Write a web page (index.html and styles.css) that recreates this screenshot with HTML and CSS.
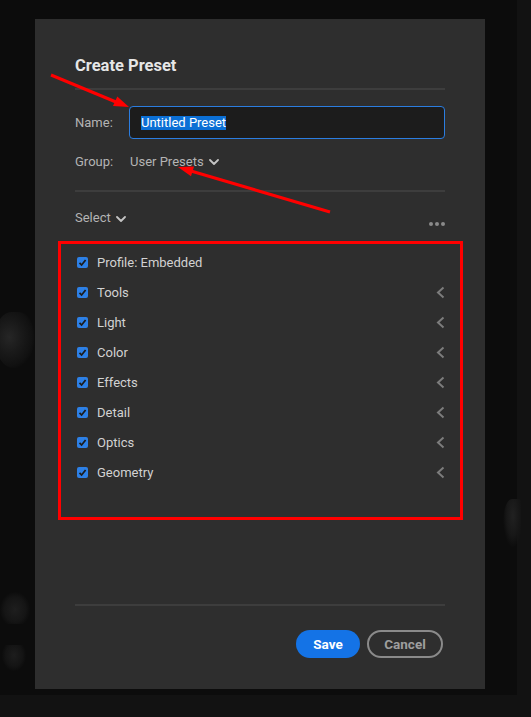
FILE: index.html
```html
<!DOCTYPE html>
<html>
<head>
<meta charset="utf-8">
<link rel="stylesheet" href="styles.css">
</head>
<body>
<div class="scene">
  <div class="photo">
    <div class="blob bottle"></div>
    <div class="blob shard"></div>
    <div class="blob tri1"></div>
    <div class="blob tri2"></div>
  </div>
  <div class="dialog">
    <h1 class="title">Create Preset</h1>
    <div class="rule"></div>
    <div class="field">
      <span class="label">Name:</span>
      <div class="input"><span class="sel">Untitled Preset</span></div>
    </div>
    <div class="field group">
      <span class="label">Group:</span>
      <span class="dropdown">User Presets
        <svg class="chev-down" width="10" height="6" viewBox="0 0 10 6"><polyline points="1,1 5,5 9,1" fill="none" stroke="#c4c4c4" stroke-width="1.8" stroke-linecap="round" stroke-linejoin="round"/></svg>
      </span>
    </div>
    <div class="rule rule2"></div>
    <div class="selectrow">
      <span class="dropdown select">Select
        <svg class="chev-down" width="10" height="6" viewBox="0 0 10 6"><polyline points="1,1 5,5 9,1" fill="none" stroke="#c4c4c4" stroke-width="1.8" stroke-linecap="round" stroke-linejoin="round"/></svg>
      </span>
      <span class="dots"><i></i><i></i><i></i></span>
    </div>
    <div class="list">
      <div class="row"><span class="cb"><svg width="11" height="11" viewBox="0 0 11 11"><polyline points="2.5,5.8 4.6,8 8.6,3" fill="none" stroke="#1c1c1c" stroke-width="1.8"/></svg></span><span class="name">Profile: Embedded</span></div>
      <div class="row"><span class="cb"><svg width="11" height="11" viewBox="0 0 11 11"><polyline points="2.5,5.8 4.6,8 8.6,3" fill="none" stroke="#1c1c1c" stroke-width="1.8"/></svg></span><span class="name">Tools</span><svg class="chev" width="9" height="13" viewBox="0 0 9 13"><polyline points="7.5,1.5 2,6.5 7.5,11.5" fill="none" stroke="#7c7c7c" stroke-width="2"/></svg></div>
      <div class="row"><span class="cb"><svg width="11" height="11" viewBox="0 0 11 11"><polyline points="2.5,5.8 4.6,8 8.6,3" fill="none" stroke="#1c1c1c" stroke-width="1.8"/></svg></span><span class="name">Light</span><svg class="chev" width="9" height="13" viewBox="0 0 9 13"><polyline points="7.5,1.5 2,6.5 7.5,11.5" fill="none" stroke="#7c7c7c" stroke-width="2"/></svg></div>
      <div class="row"><span class="cb"><svg width="11" height="11" viewBox="0 0 11 11"><polyline points="2.5,5.8 4.6,8 8.6,3" fill="none" stroke="#1c1c1c" stroke-width="1.8"/></svg></span><span class="name">Color</span><svg class="chev" width="9" height="13" viewBox="0 0 9 13"><polyline points="7.5,1.5 2,6.5 7.5,11.5" fill="none" stroke="#7c7c7c" stroke-width="2"/></svg></div>
      <div class="row"><span class="cb"><svg width="11" height="11" viewBox="0 0 11 11"><polyline points="2.5,5.8 4.6,8 8.6,3" fill="none" stroke="#1c1c1c" stroke-width="1.8"/></svg></span><span class="name">Effects</span><svg class="chev" width="9" height="13" viewBox="0 0 9 13"><polyline points="7.5,1.5 2,6.5 7.5,11.5" fill="none" stroke="#7c7c7c" stroke-width="2"/></svg></div>
      <div class="row"><span class="cb"><svg width="11" height="11" viewBox="0 0 11 11"><polyline points="2.5,5.8 4.6,8 8.6,3" fill="none" stroke="#1c1c1c" stroke-width="1.8"/></svg></span><span class="name">Detail</span><svg class="chev" width="9" height="13" viewBox="0 0 9 13"><polyline points="7.5,1.5 2,6.5 7.5,11.5" fill="none" stroke="#7c7c7c" stroke-width="2"/></svg></div>
      <div class="row"><span class="cb"><svg width="11" height="11" viewBox="0 0 11 11"><polyline points="2.5,5.8 4.6,8 8.6,3" fill="none" stroke="#1c1c1c" stroke-width="1.8"/></svg></span><span class="name">Optics</span><svg class="chev" width="9" height="13" viewBox="0 0 9 13"><polyline points="7.5,1.5 2,6.5 7.5,11.5" fill="none" stroke="#7c7c7c" stroke-width="2"/></svg></div>
      <div class="row"><span class="cb"><svg width="11" height="11" viewBox="0 0 11 11"><polyline points="2.5,5.8 4.6,8 8.6,3" fill="none" stroke="#1c1c1c" stroke-width="1.8"/></svg></span><span class="name">Geometry</span><svg class="chev" width="9" height="13" viewBox="0 0 9 13"><polyline points="7.5,1.5 2,6.5 7.5,11.5" fill="none" stroke="#7c7c7c" stroke-width="2"/></svg></div>
    </div>
    <div class="rule rule3"></div>
    <div class="buttons">
      <button class="btn save">Save</button>
      <button class="btn cancel">Cancel</button>
    </div>
  </div>
  <svg class="arrows" width="531" height="717" viewBox="0 0 531 717">
    <line x1="51" y1="75" x2="116" y2="102" stroke="#f00" stroke-width="3"/>
    <polygon points="129,107 117.3,96.6 113,106" fill="#f00"/>
    <line x1="330" y1="212" x2="191" y2="171" stroke="#f00" stroke-width="3"/>
    <polygon points="178,167 194,166.4 191,176.2" fill="#f00"/>
  </svg>
</div>
</body>
</html>
```
FILE: styles.css
```css
* { box-sizing: border-box; }
html, body { margin: 0; padding: 0; }
body {
  background: #121212;
  width: 531px;
  height: 717px;
  overflow: hidden;
  font-family: Roboto, "Noto Sans", sans-serif;
}
.scene {
  position: relative;
  width: 531px;
  height: 717px;
}
.photo {
  position: absolute;
  left: 0;
  top: 0;
  width: 517px;
  height: 695px;
  background: #0c0c0c;
}
.blob { position: absolute; }
.bottle {
  left: -4px; top: 312px; width: 38px; height: 56px;
  border-radius: 40% 40% 45% 45%;
  background: radial-gradient(ellipse at 35% 45%, #262626 0%, #1a1a1a 35%, #111111 65%, transparent 75%);
}
.shard {
  left: 503px; top: 499px; width: 18px; height: 48px;
  border-radius: 60% 10% 10% 60%;
  background: radial-gradient(ellipse at 55% 35%, #212121 0%, #171717 45%, transparent 72%);
}
.tri1 {
  left: 0; top: 592px; width: 30px; height: 32px;
  background: radial-gradient(ellipse at 50% 55%, #1e1e1e 0%, #151515 50%, transparent 72%);
}
.tri2 {
  left: 2px; top: 645px; width: 24px; height: 26px;
  background: radial-gradient(ellipse at 50% 40%, #1d1d1d 0%, #141414 50%, transparent 72%);
}
.dialog {
  position: relative;
  margin-left: 35px;
  width: 450px;
  height: 670px;
  background: #2e2e2e;
  padding: 37px 40px 0 40px;
  display: flex;
  flex-direction: column;
  transform: translateY(19px);
}
.title {
  margin: 0;
  font-size: 16.5px;
  line-height: 20px;
  font-weight: 700;
  color: #e6e6e6;
}
.rule {
  height: 2px;
  background: #3d3d3d;
  margin-top: 12px;
}
.field {
  display: flex;
  align-items: center;
  margin-top: 16px;
}
.label {
  width: 54px;
  font-size: 13px;
  color: #b4b4b4;
}
.input {
  flex: 1;
  height: 33px;
  background: #1c1c1c;
  border: 1px solid #2b7de0;
  border-radius: 4px;
  padding-left: 11px;
  display: flex;
  align-items: center;
}
.sel {
  background: #0b6fd5;
  color: #ffffff;
  font-size: 13px;
  line-height: 14px;
}
.field.group {
  margin-top: 12px;
  height: 20px;
}
.field.group .label { width: 55px; }
.dropdown {
  display: inline-flex;
  align-items: center;
  font-size: 13px;
  color: #b4b4b4;
}
.chev-down { margin-left: 5px; margin-top: 1px; }
.rule2 { margin-top: 19px; }
.selectrow {
  display: flex;
  justify-content: space-between;
  align-items: flex-start;
  margin-top: 16px;
  height: 20px;
}
.select { line-height: 20px; }
.dots {
  display: flex;
  gap: 2px;
  margin-top: 14px;
}
.dots i {
  display: block;
  width: 4px;
  height: 4px;
  border-radius: 50%;
  background: #8a8a8a;
}
.list {
  margin: 13px -18px 0 -17px;
  height: 279px;
  border: 3px solid #ff0000;
  padding: 3px 15px 0 16px;
}
.row {
  display: flex;
  align-items: center;
  height: 30px;
}
.cb {
  width: 11px;
  height: 11px;
  border-radius: 2px;
  background: #2d80e6;
  display: flex;
  flex: none;
}
.name {
  margin-left: 9px;
  font-size: 13px;
  color: #d2d2d2;
  flex: 1;
}
.chev { flex: none; }
.rule3 { margin-top: 84px; }
.buttons {
  display: flex;
  justify-content: flex-end;
  gap: 7px;
  margin-top: 24px;
  padding-right: 2px;
}
.btn {
  height: 28px;
  border-radius: 14px;
  font-family: Roboto, "Noto Sans", sans-serif;
  font-size: 13.5px;
  font-weight: 700;
  padding: 0;
}
.save {
  width: 64px;
  background: #1473e6;
  color: #ffffff;
  border: none;
}
.cancel {
  width: 76px;
  background: transparent;
  color: #9e9e9e;
  border: 2px solid #8a8a8a;
}
.arrows {
  position: absolute;
  left: 0;
  top: 0;
  pointer-events: none;
}
```
